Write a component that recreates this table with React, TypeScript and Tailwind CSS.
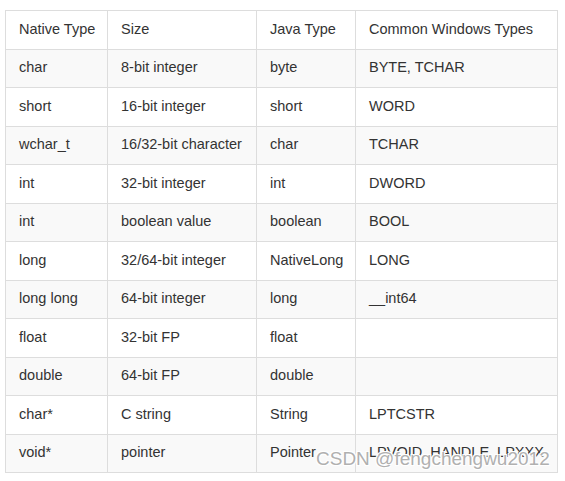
const rows = [
  ["char", "8-bit integer", "byte", "BYTE, TCHAR"],
  ["short", "16-bit integer", "short", "WORD"],
  ["wchar_t", "16/32-bit character", "char", "TCHAR"],
  ["int", "32-bit integer", "int", "DWORD"],
  ["int", "boolean value", "boolean", "BOOL"],
  ["long", "32/64-bit integer", "NativeLong", "LONG"],
  ["long long", "64-bit integer", "long", "__int64"],
  ["float", "32-bit FP", "float", ""],
  ["double", "64-bit FP", "double", ""],
  ["char*", "C string", "String", "LPTCSTR"],
  ["void*", "pointer", "Pointer", "LPVOID, HANDLE, LPXXX"],
];

const head = ["Native Type", "Size", "Java Type", "Common Windows Types"];
const widths = ["w-[102px]", "w-[149px]", "w-[99px]", "w-[202px]"];

export default function App() {
  return (
    <div className="relative w-[565px] h-[481px] bg-white font-['Liberation_Sans',Arial,sans-serif] text-[14.5px] text-[#333]">
      <div className="pt-[10px] pl-[5px]">
        <table className="border-collapse table-fixed w-[552px]">
          <thead>
            <tr>
              {head.map((h, i) => (
                <th key={h} className={`${widths[i]} h-[38.5px] pl-[13px] pr-[4px] py-0 border border-[#ddd] text-left font-normal whitespace-nowrap`}>
                  {h}
                </th>
              ))}
            </tr>
          </thead>
          <tbody>
            {rows.map((r, ri) => (
              <tr key={ri} className={ri % 2 === 0 ? "bg-[#f9f9f9]" : "bg-white"}>
                {r.map((c, ci) => (
                  <td key={ci} className="h-[38.5px] pl-[13px] pr-[4px] py-0 border border-[#ddd] whitespace-nowrap">
                    {c}
                  </td>
                ))}
              </tr>
            ))}
          </tbody>
        </table>
      </div>
      <div className="absolute left-[316px] top-[449px] text-[19px] leading-none text-[#b0b0b0] whitespace-nowrap [text-shadow:1px_1px_0_#fff,-1px_-1px_0_#fff,1px_-1px_0_#fff,-1px_1px_0_#fff]">
        CSDN @fengchengwu2012
      </div>
    </div>
  );
}
